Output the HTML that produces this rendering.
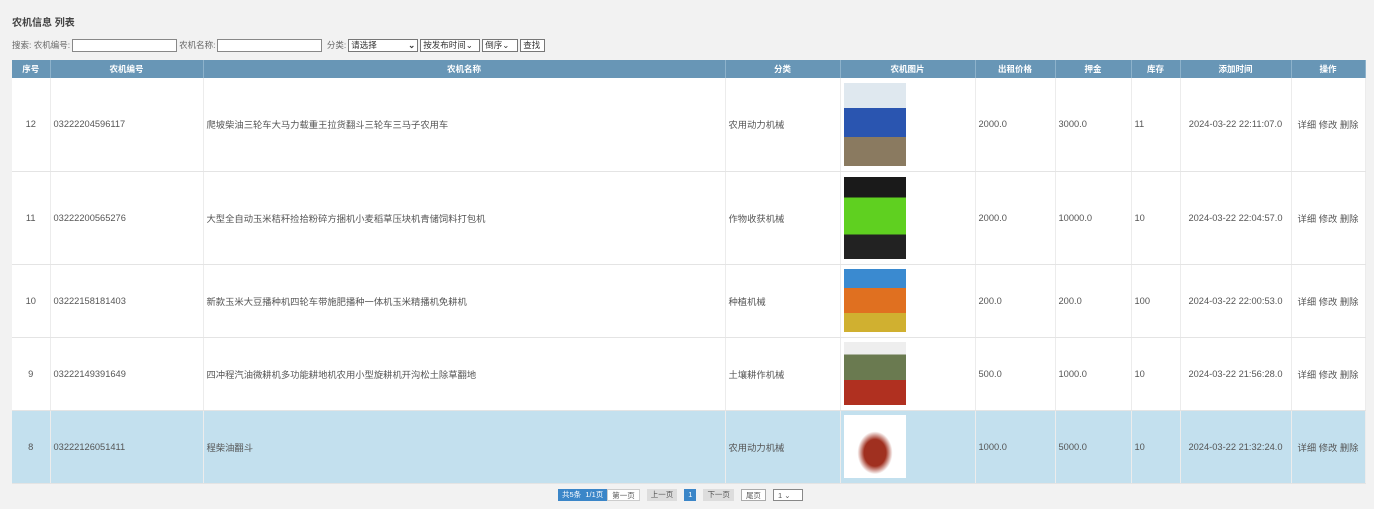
<!DOCTYPE html>
<html><head><meta charset="utf-8"><style>
*{box-sizing:border-box;margin:0;padding:0}
body{width:1374px;height:509px;background:#f2f2f2;font-family:"Liberation Sans","Noto Sans CJK SC",sans-serif;font-size:9px;color:#555;position:relative;overflow:hidden}
.title{position:absolute;left:12px;top:14px;font-size:10px;font-weight:bold;color:#444}
.search{position:absolute;left:12px;top:38px;height:14px;display:flex;align-items:center;gap:2px;font-size:8.5px;color:#666}
.search input{height:13px;border:1px solid #888;background:#fff}
.sel{height:13px;border:1px solid #777;background:#fff;font-size:8.5px;color:#333;padding:0 2px;display:flex;align-items:center;justify-content:space-between}
table{position:absolute;left:12px;top:60px;border-collapse:collapse;table-layout:fixed;width:1353px}
th{background:#6896b6;color:#fff;font-size:8.5px;font-weight:bold;height:18px;border-right:1px solid #8db2cb;text-align:center}
td{background:#fff;border-right:1px solid #ececec;border-bottom:1px solid #e4e4e4;padding-left:3px;font-size:9.3px;color:#555}
tr.hl td{background:#c3e0ee}
td.c{text-align:center;padding:0}
.img{width:62px;margin-left:0}
.pager{position:absolute;top:489px;left:558px;display:flex;gap:0;font-size:7.5px;align-items:center}
.pager span{display:inline-block;height:12px;line-height:12px;padding:0 4px}
</style></head><body>
<div class="title">农机信息 列表</div>
<div class="search">搜索: 农机编号: <input style="width:105px"> 农机名称: <input style="width:105px"> &nbsp;分类: <span class="sel" style="width:70px">请选择<b>⌄</b></span><span class="sel" style="width:60px">按发布时间⌄</span><span class="sel" style="width:36px">倒序⌄</span><span class="sel" style="width:25px">查找</span></div>
<table>
<colgroup><col style="width:38px"><col style="width:153px"><col style="width:522px"><col style="width:115px"><col style="width:135px"><col style="width:80px"><col style="width:76px"><col style="width:49px"><col style="width:111px"><col style="width:74px"></colgroup>
<tr><th>序号</th><th>农机编号</th><th>农机名称</th><th>分类</th><th>农机图片</th><th>出租价格</th><th>押金</th><th>库存</th><th>添加时间</th><th>操作</th></tr>
<tr style="height:93px"><td class="c">12</td><td>03222204596117</td><td>爬坡柴油三轮车大马力载重王拉货翻斗三轮车三马子农用车</td><td>农用动力机械</td><td><div class="img" style="height:83px;background:linear-gradient(#dfe8ef 0 30%,#2a55b0 30% 65%,#8a7a60 65%)"></div></td><td>2000.0</td><td>3000.0</td><td>11</td><td class="c">2024-03-22 22:11:07.0</td><td class="c">详细 修改 删除</td></tr>
<tr style="height:93px"><td class="c">11</td><td>03222200565276</td><td>大型全自动玉米秸秆捡拾粉碎方捆机小麦稻草压块机青储饲料打包机</td><td>作物收获机械</td><td><div class="img" style="height:82px;background:linear-gradient(#1a1a1a 0 25%,#5fd020 25% 70%,#222 70%)"></div></td><td>2000.0</td><td>10000.0</td><td>10</td><td class="c">2024-03-22 22:04:57.0</td><td class="c">详细 修改 删除</td></tr>
<tr style="height:73px"><td class="c">10</td><td>03222158181403</td><td>新款玉米大豆播种机四轮车带施肥播种一体机玉米精播机免耕机</td><td>种植机械</td><td><div class="img" style="height:63px;background:linear-gradient(#3a8ad0 0 30%,#e07020 30% 70%,#d0b030 70%)"></div></td><td>200.0</td><td>200.0</td><td>100</td><td class="c">2024-03-22 22:00:53.0</td><td class="c">详细 修改 删除</td></tr>
<tr style="height:73px"><td class="c">9</td><td>03222149391649</td><td>四冲程汽油微耕机多功能耕地机农用小型旋耕机开沟松土除草翻地</td><td>土壤耕作机械</td><td><div class="img" style="height:63px;background:linear-gradient(#eee 0 20%,#6a7a50 20% 60%,#b03020 60%)"></div></td><td>500.0</td><td>1000.0</td><td>10</td><td class="c">2024-03-22 21:56:28.0</td><td class="c">详细 修改 删除</td></tr>
<tr class="hl" style="height:73px"><td class="c">8</td><td>03222126051411</td><td>程柴油翻斗</td><td>农用动力机械</td><td><div class="img" style="height:63px;background:radial-gradient(ellipse at 50% 60%,#a03020 0 25%,#fff 40%)"></div></td><td>1000.0</td><td>5000.0</td><td>10</td><td class="c">2024-03-22 21:32:24.0</td><td class="c">详细 修改 删除</td></tr>
</table>
<div class="pager"><span style="background:#3b86c8;color:#fff">共5条 &nbsp;1/1页</span><span style="background:#fff;border:1px solid #ccc">第一页</span><span style="background:#ddd;margin-left:7px">上一页</span><span style="background:#3b86c8;color:#fff;margin-left:7px">1</span><span style="background:#ddd;margin-left:7px">下一页</span><span style="background:#fff;border:1px solid #aaa;margin-left:7px">尾页</span><span style="background:#fff;border:1px solid #888;margin-left:7px;width:30px">1 ⌄</span></div>
</body></html>
